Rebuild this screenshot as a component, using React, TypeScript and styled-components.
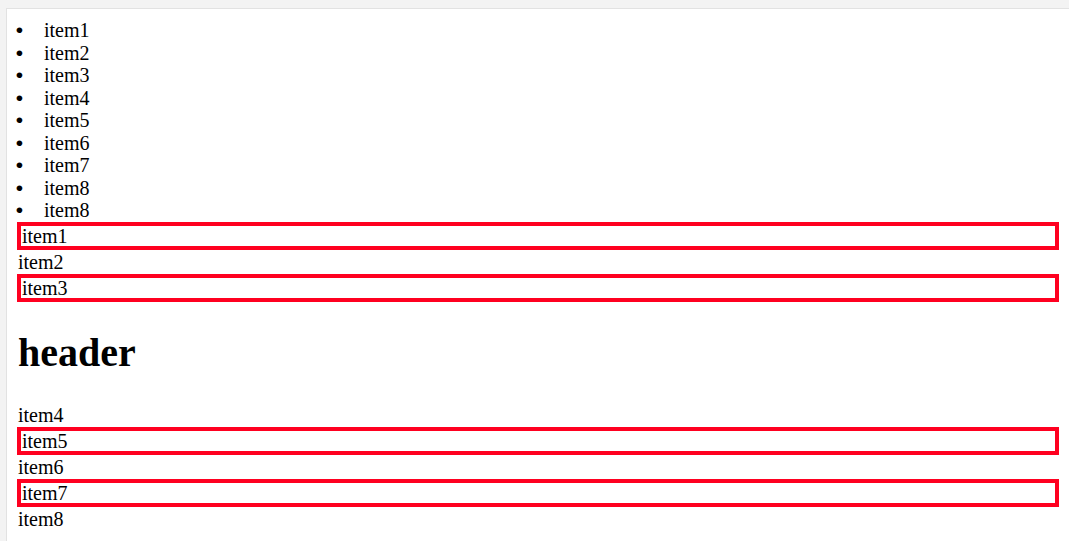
import React from 'react'
import styled, { createGlobalStyle } from 'styled-components'

const GlobalStyle = createGlobalStyle`
  html, body {
    margin: 0;
    padding: 0;
    background: #f3f3f3;
  }
  body {
    font-family: 'Liberation Serif', 'Times New Roman', serif;
    color: #000;
  }
`

const Frame = styled.div`
  margin: 8px 0 0 6px;
  min-height: 533px;
  background: #fff;
  border-top: 1px solid #e2e2e2;
  border-left: 1px solid #e2e2e2;
  padding: 10px 10px 0 10px;
  box-sizing: border-box;
`

const List = styled.ul`
  margin: 0;
  padding: 0 0 0 27px;
  font-size: 20px;
`

const ListItem = styled.li`
  line-height: 22.5px;
  &::marker {
    content: '\u2022\u2003';
    font-size: 21px;
    font-family: 'Liberation Sans', Arial, sans-serif;
  }
`

const Line = styled.div<{ $boxed?: boolean }>`
  font-size: 20px;
  line-height: ${(p) => (p.$boxed ? '20px' : '24px')};
  border: ${(p) => (p.$boxed ? '4px solid #ff0020' : 'none')};
  padding-left: ${(p) => (p.$boxed ? '1px' : '1px')};
`

const Header = styled.h1`
  margin: 27px 0;
  padding-left: 1px;
  font-size: 40px;
  line-height: 47px;
  font-weight: bold;
`

const bullets = ['item1', 'item2', 'item3', 'item4', 'item5', 'item6', 'item7', 'item8', 'item8']

const App = () => (
  <>
    <GlobalStyle />
    <Frame>
      <List>
        {bullets.map((b, i) => (
          <ListItem key={i}>{b}</ListItem>
        ))}
      </List>
      <Line $boxed>item1</Line>
      <Line>item2</Line>
      <Line $boxed>item3</Line>
      <Header>header</Header>
      <Line>item4</Line>
      <Line $boxed>item5</Line>
      <Line>item6</Line>
      <Line $boxed>item7</Line>
      <Line>item8</Line>
    </Frame>
  </>
)

export default App
